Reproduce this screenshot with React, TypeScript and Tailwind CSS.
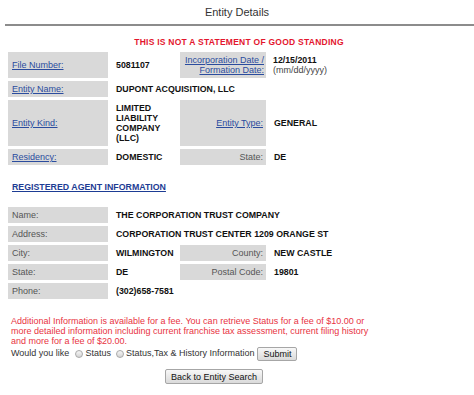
import React from 'react';

const label = 'bg-[#d9d9d9] px-[4px] py-[3px] text-[9px] leading-[10px] whitespace-nowrap';
const link = 'text-[#2b4c9e] underline';
const value = 'pl-[5px] py-[3px] text-[8.8px] leading-[10px] font-bold text-[#111]';

const Radio: React.FC = () => (
  <span className="inline-block w-[8px] h-[8px] rounded-full border border-[#a9a9a9] bg-linear-to-b from-[#f6f6f6] to-[#d4d4d4]" />
);

const Cols: React.FC = () => (
  <colgroup>
    <col className="w-[100px]" />
    <col className="w-[66px]" />
    <col className="w-[86px]" />
    <col className="w-[120px]" />
  </colgroup>
);

const App: React.FC = () => {
  return (
    <div
      className="w-[474px] h-[395px] bg-white text-[#222] overflow-hidden"
      style={{ fontFamily: '"Liberation Sans", Arial, sans-serif' }}
    >
      {/* Header */}
      <div className="pt-[5px] text-center text-[11px] leading-[14px] text-[#333]">Entity Details</div>
      <div className="mt-[5px] ml-[5px] h-[2px] bg-[#8c8c8c]" />

      <div className="mt-[11px] text-center text-[8.5px] leading-[10px] font-bold tracking-[0.25px] text-[#e3162e] pl-[4px]">
        THIS IS NOT A STATEMENT OF GOOD STANDING
      </div>

      {/* Entity table */}
      <table className="mt-[2px] ml-[5px] table-fixed w-[387px] border-separate border-spacing-[3px]">
        <Cols />
        <tbody>
          <tr>
            <td className={label}>
              <span className={link}>File Number:</span>
            </td>
            <td className={value}>5081107</td>
            <td className={`${label} text-right pl-[2px] pr-[2px]`}>
              <span className={link}>Incorporation Date /</span>
              <br />
              <span className={link}>Formation Date:</span>
            </td>
            <td className="pl-[4px] py-[3px] text-[9px] leading-[10px]">
              <span className="font-bold text-[#111] text-[8.8px]">12/15/2011</span>
              <br />
              <span className="text-[#444]">(mm/dd/yyyy)</span>
            </td>
          </tr>
          <tr>
            <td className={label}>
              <span className={link}>Entity Name:</span>
            </td>
            <td colSpan={3} className={value}>DUPONT ACQUISITION, LLC</td>
          </tr>
          <tr>
            <td className={label}>
              <span className={link}>Entity Kind:</span>
            </td>
            <td className={value}>LIMITED LIABILITY COMPANY (LLC)</td>
            <td className={`${label} text-right pr-[3px]`}>
              <span className={link}>Entity Type:</span>
            </td>
            <td className={`${value} pl-[4px]`}>GENERAL</td>
          </tr>
          <tr>
            <td className={label}>
              <span className={link}>Residency:</span>
            </td>
            <td className={value}>DOMESTIC</td>
            <td className={`${label} text-right pr-[3px] text-[#555]`}>State:</td>
            <td className={`${value} pl-[4px]`}>DE</td>
          </tr>
        </tbody>
      </table>

      {/* Registered agent */}
      <div className="mt-[14px] pl-[12px] text-[8.8px] leading-[10px] font-bold text-[#1d3c94] underline">
        REGISTERED AGENT INFORMATION
      </div>

      <table className="mt-[12px] ml-[5px] table-fixed w-[387px] border-separate border-spacing-[3px]">
        <Cols />
        <tbody className="text-[#555]">
          <tr>
            <td className={label}>Name:</td>
            <td colSpan={3} className={value}>THE CORPORATION TRUST COMPANY</td>
          </tr>
          <tr>
            <td className={label}>Address:</td>
            <td colSpan={3} className={value}>CORPORATION TRUST CENTER 1209 ORANGE ST</td>
          </tr>
          <tr>
            <td className={label}>City:</td>
            <td className={value}>WILMINGTON</td>
            <td className={`${label} text-right pr-[3px]`}>County:</td>
            <td className={`${value} pl-[4px]`}>NEW CASTLE</td>
          </tr>
          <tr>
            <td className={label}>State:</td>
            <td className={value}>DE</td>
            <td className={`${label} text-right pr-[3px]`}>Postal Code:</td>
            <td className={`${value} pl-[4px]`}>19801</td>
          </tr>
          <tr>
            <td className={label}>Phone:</td>
            <td colSpan={3} className={value}>(302)658-7581</td>
          </tr>
        </tbody>
      </table>

      {/* Fee notice */}
      <p className="mt-[14px] pl-[11px] text-[9px] leading-[10px] text-[#e8333f]">
        Additional Information is available for a fee. You can retrieve Status for a fee of $10.00 or
        <br />
        more detailed information including current franchise tax assessment, current filing history
        <br />
        and more for a fee of $20.00.
      </p>

      <div className="pl-[11px] h-[15px] flex items-center text-[9px] text-[#333]">
        <span>Would you like</span>
        <span className="ml-[6px] flex items-center gap-[2px]">
          <Radio />
          <span>Status</span>
        </span>
        <span className="ml-[5px] flex items-center gap-[2px]">
          <Radio />
          <span>Status,Tax &amp; History Information</span>
        </span>
        <button className="ml-[3px] h-[14px] px-[5px] border border-[#a6a6a6] rounded-[2px] bg-linear-to-b from-[#f8f8f8] to-[#dadada] text-[9px] leading-[12px] text-[#111]">
          Submit
        </button>
      </div>

      <div className="mt-[8px] w-[428px] flex justify-center">
        <button className="h-[15px] px-[5px] border border-[#a6a6a6] rounded-[2px] bg-linear-to-b from-[#f8f8f8] to-[#dadada] text-[9px] leading-[12px] text-[#111]">
          Back to Entity Search
        </button>
      </div>
    </div>
  );
};

export default App;
